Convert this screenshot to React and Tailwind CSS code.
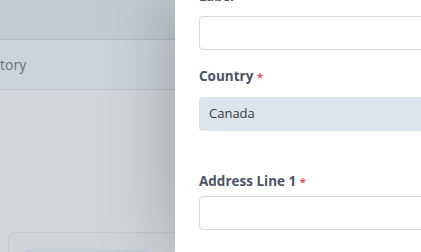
export default function App() {
  return (
    <div className="relative w-[421px] h-[252px] overflow-hidden bg-[#d2d6db] font-['Open_Sans',sans-serif]">
      {/* Background page (dimmed) */}
      <div className="flex flex-col h-full">
        <div className="shrink-0 h-[40px] bg-[#c2cad3] border-b border-[#b4bcc6]" />
        <div className="shrink-0 h-[50px] bg-[#ccd3da] border-b border-[#bcc3cc] flex items-center">
          <span className="text-[14px] text-[#66707b] leading-none">tory</span>
        </div>
        <div className="shrink-0 pt-[142px] pl-[8px]">
          <div className="h-[40px] border border-[#c3c8cd] rounded-[6px] bg-[#d0d4d9] pt-[16px] pl-[16px]">
            <div className="w-[124px] h-[10px] rounded-[3px] bg-[#c5ced9]" />
          </div>
        </div>
      </div>

      {/* Drawer */}
      <div className="absolute top-0 bottom-0 left-[175px] w-[400px] bg-white shadow-[0_0_70px_rgba(0,0,0,0.28)] pl-[24px]">
        <div className="-mt-[13px] flex flex-col">
          <label className="text-[13px] font-bold text-[#4b5563] leading-[18px] mb-[10px]">
            Label <span className="text-[11px] text-[#e8495f]">*</span>
          </label>
          <div className="h-[34px] border border-[#d6d9e3] rounded-[4px] bg-white" />

          <label className="mt-[17px] text-[13.5px] font-bold text-[#4b5563] leading-[18px] mb-[11px]">
            Country <span className="text-[11px] text-[#e8495f]">*</span>
          </label>
          <div className="h-[34px] rounded-[4px] bg-[#dee4ed] flex items-center pl-[10px] text-[13px] text-[#333a42]">
            Canada
          </div>

          <label className="mt-[41px] text-[13.5px] font-bold text-[#4b5563] leading-[18px] mb-[5px]">
            Address Line 1 <span className="text-[11px] text-[#e8495f]">*</span>
          </label>
          <div className="h-[34px] border border-[#d6d9e3] rounded-[4px] bg-white" />
        </div>
      </div>
    </div>
  )
}
